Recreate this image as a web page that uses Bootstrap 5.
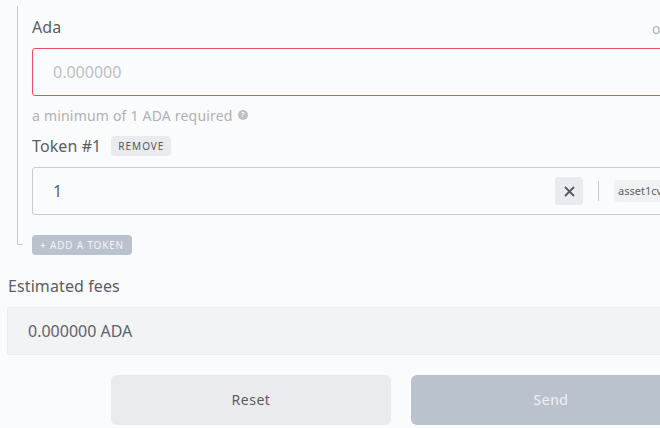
<!DOCTYPE html>
<html lang="en">
<head>
<meta charset="utf-8">
<title>Send</title>
<link href="https://cdn.jsdelivr.net/npm/bootstrap@5.3.0/dist/css/bootstrap.min.css" rel="stylesheet">
<style>
html, body { width: 660px; height: 428px; overflow: hidden; }
body { background: #fafbfd; font-family: "Noto Sans", sans-serif; color: #4e5157; }
.page-frame { width: 788px; margin-left: 7px; padding-top: 6px; }
.tree-line { width: 6px; margin: 0 9px 10px 10px; border-left: 1px solid #c4c8ce; border-bottom: 1px solid #c4c8ce; flex-shrink: 0; }
.tree-body { flex: 1 1 auto; min-width: 0; }
.field-label { font-size: 16px; line-height: 22px; font-weight: 400; color: #5a5d63; letter-spacing: .1px; }
.ada-row { height: 42px; padding-top: 10px; }
.avail { width: 143px; font-size: 14px; color: #b0b3b8; white-space: nowrap; padding-top: 2px; }
.entry { height: 48px; border: 1px solid #c8cdd6; border-radius: 3px; padding: 0 20px; font-size: 16px; color: #5f6268; }
.entry-bad { border-color: #ee4c5f; color: #bdbfc3; }
.hint { height: 40px; padding-top: 10px; font-size: 14px; line-height: 20px; color: #aeb1b6; letter-spacing: .2px; }
.hint-dot { width: 10px; height: 10px; font-size: 7px; line-height: 10px; background: #bcbfc3; color: #fafbfd; font-weight: 700; margin-left: 5px; }
.token-row { height: 31px; align-items: flex-start; }
.token-row .field-label { line-height: 20px; }
.mini-btn { height: 20px; font-size: 10px; line-height: 20px; letter-spacing: 1px; font-weight: 400; border: 0; border-radius: 4px; padding: 0; }
.mini-remove { width: 60px; background: #e9ebef; color: #55585e; margin-left: 10px; }
.mini-add { width: 100px; background: #bac2cd; color: #f2f4f7; margin-top: 20px; letter-spacing: .8px; }
.token-entry { border-color: #c5cbd8; padding-right: 0; }
.clear-box { width: 28px; height: 28px; background: #e9ebef; border-radius: 3px; margin-left: auto; }
.split { width: 1px; height: 20px; background: #c5c9d2; margin: 0 15px; }
.asset-tag { width: 180px; height: 22px; padding-left: 4px; background: #f0f1f2; border-radius: 3px; font-size: 11px; line-height: 22px; color: #5f6268; }
.fees-label { margin-top: 21px; margin-left: 1px; height: 31px; line-height: 20px; }
.fees-box { height: 48px; background: #f2f3f5; border: 1px solid #ebecef; border-radius: 2px; padding: 0 20px; font-size: 16px; color: #5f6268; margin-bottom: 20px; }
.act-row { gap: 20px; }
.act-btn { width: 280px; height: 50px; border: 0; border-radius: 6px; font-size: 14px; line-height: 18px; padding: 0; font-weight: 400; letter-spacing: .5px; }
.act-reset { background: #e9ebef; color: #5a5d63; }
.act-send { background: #bac2cd; color: #f0f2f5; }
</style>
</head>
<body>
<div class="page-frame">
  <div class="d-flex">
    <div class="tree-line"></div>
    <div class="tree-body">
      <div class="ada-row d-flex justify-content-between">
        <span class="field-label">Ada</span>
        <span class="avail">of 0.000000 ADA</span>
      </div>
      <div class="entry entry-bad d-flex align-items-center">0.000000</div>
      <div class="hint d-flex align-items-start">a minimum of 1 ADA required<span class="hint-dot rounded-circle d-inline-block text-center mt-1">?</span></div>
      <div class="token-row d-flex">
        <span class="field-label">Token #1</span>
        <button type="button" class="mini-btn mini-remove">REMOVE</button>
      </div>
      <div class="entry token-entry d-flex align-items-center">
        <span>1</span>
        <span class="clear-box d-flex align-items-center justify-content-center">
          <svg width="11" height="11" viewBox="0 0 11 11"><path d="M1 1l9 9M10 1l-9 9" stroke="#55585e" stroke-width="1.800" fill="none"/></svg>
        </span>
        <span class="split"></span>
        <span class="asset-tag overflow-hidden text-nowrap">asset1cvm8x0pq7t2</span>
      </div>
      <button type="button" class="mini-btn mini-add d-block">+ ADD A TOKEN</button>
    </div>
  </div>
  <div class="field-label fees-label">Estimated fees</div>
  <div class="fees-box d-flex align-items-center">0.000000 ADA</div>
  <div class="d-flex justify-content-center act-row">
    <button type="button" class="act-btn act-reset">Reset</button>
    <button type="button" class="act-btn act-send">Send</button>
  </div>
</div>
</body>
</html>
